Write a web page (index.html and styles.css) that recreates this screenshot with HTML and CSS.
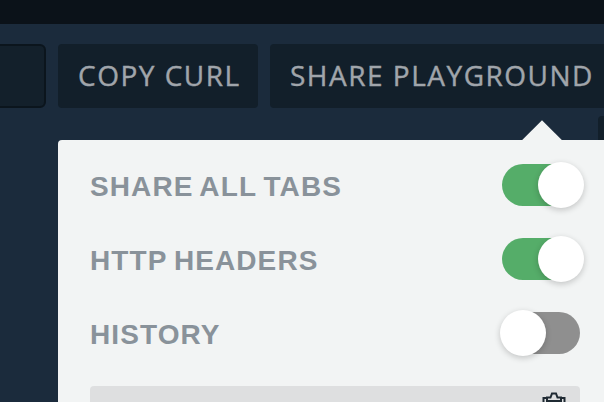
FILE: index.html
```html
<!DOCTYPE html>
<html lang="en">
<head>
<meta charset="utf-8">
<title>Share Playground</title>
<link rel="stylesheet" href="styles.css">
</head>
<body>
<div class="app">
  <div class="topbar"></div>
  <div class="toolbar">
    <div class="field"></div>
    <button class="btn">COPY CURL</button>
    <button class="btn">SHARE PLAYGROUND</button>
  </div>
  <div class="corner"></div>
  <div class="popup">
    <div class="arrow"></div>
    <div class="row"><span class="label">SHARE ALL TABS</span><span class="toggle on"><span class="knob"></span></span></div>
    <div class="row"><span class="label">HTTP HEADERS</span><span class="toggle on"><span class="knob"></span></span></div>
    <div class="row"><span class="label">HISTORY</span><span class="toggle off"><span class="knob"></span></span></div>
    <div class="urlbox">
      <svg class="clip" viewBox="0 0 24 24" width="24" height="24" fill="none" stroke="#1f2a33" stroke-width="2"><path d="M5 6H1.500V24H22.500V6H19"/><path d="M5 9V5.500H8.500L10 1.500H14L15.500 5.500H19V9Z"/></svg>
    </div>
  </div>
</div>
</body>
</html>
```
FILE: styles.css
```css
html, body { margin: 0; padding: 0; }
.app { position: relative; width: 604px; height: 402px; overflow: hidden; background: #1b2b3c; }
.topbar { height: 24px; background: #0b1219; }
.toolbar { display: flex; gap: 12px; margin: 20px 0 0 -54px; height: 64px; }
.field { box-sizing: border-box; width: 100px; height: 64px; background: #13202b; border: 2px solid #0b151d; border-radius: 6px; flex: none; }
.btn { flex: none; width: 200px; height: 64px; padding: 0 0 2px 20px; border: 0; border-radius: 4px; background: #121f2a; color: #a0a5ab; font-family: "Open Sans", sans-serif; font-weight: 500; font-size: 28px; letter-spacing: 1.5px; -webkit-text-stroke: 0.4px #a0a5ab; white-space: nowrap; text-align: left; }
.btn + .btn { width: 344px; }
.corner { position: absolute; left: 598px; top: 116px; width: 40px; height: 40px; background: #121f2a; border-radius: 4px; }
.popup { position: absolute; left: 58px; top: 140px; width: 600px; height: 300px; background: #f2f4f4; border-radius: 4px; padding: 8px 32px; box-sizing: border-box; }
.arrow { position: absolute; left: 470px; top: -14px; width: 28px; height: 28px; background: #f2f4f4; transform: rotate(45deg); }
.row { position: relative; display: flex; align-items: center; justify-content: space-between; width: 490px; height: 74px; }
.label { padding-top: 3px; font-family: "Liberation Sans", sans-serif; font-weight: 700; font-size: 28px; letter-spacing: 1.1px; word-spacing: -2px; color: #89929a; white-space: nowrap; }
.toggle { position: relative; display: block; width: 78px; height: 42px; border-radius: 21px; }
.toggle.on { background: #55ad69; }
.toggle.off { background: #8f8f8f; }
.knob { position: absolute; top: -2px; width: 46px; height: 46px; border-radius: 50%; background: #fff; box-shadow: 0 2px 6px rgba(0,0,0,.2); }
.on .knob { right: -4px; }
.off .knob { left: -2px; }
.urlbox { position: relative; box-sizing: border-box; width: 490px; height: 100px; margin-top: 16px; background: #dedfe0; border-radius: 4px; }
.clip { position: absolute; right: 14px; top: 6px; }
```
